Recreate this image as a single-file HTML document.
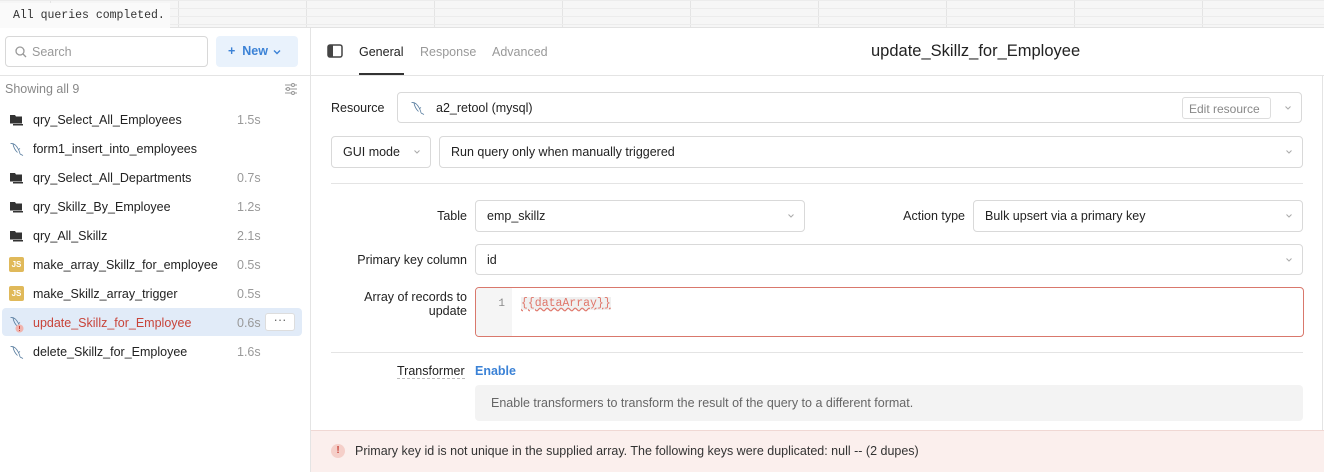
<!DOCTYPE html>
<html><head><style>
*{box-sizing:border-box;margin:0;padding:0}
body{width:1324px;height:472px;overflow:hidden;font-family:"Liberation Sans",sans-serif;font-size:12.5px;color:#222;background:#fff;position:relative}
.abs{position:absolute}
.top{left:0;top:0;width:1324px;height:28px;background:#f6f6f6;border-bottom:1px solid #e2e2e2;
background-image:linear-gradient(#ececec 1px,transparent 1px),linear-gradient(90deg,#e4e4e4 1px,transparent 1px);background-size:100% 8px,128px 100%;background-position:0 0,50px 0}
.toast{left:0;top:3px;width:170px;height:25px;background:#fafafa;font-family:"Liberation Mono",monospace;font-size:11.5px;padding:6px 0 0 13px;color:#333;white-space:nowrap}
.side{left:0;top:28px;width:311px;height:444px;border-right:1px solid #e4e4e4;background:#fff}
.search{left:5px;top:36px;width:203px;height:31px;border:1px solid #d8d8d8;border-radius:4px;color:#999;padding:8px 0 0 26px}
.new{left:216px;top:36px;width:82px;height:31px;background:#e9f2fc;border-radius:4px;color:#3b82d6;font-weight:bold;padding:8px 0 0 12px}
.row{left:2px;width:300px;height:28px;padding:8px 0 0 31px;white-space:nowrap}
.row .t{position:absolute;left:235px;top:8px;color:#999}
.ic{position:absolute;left:7px;top:7px}
.js{width:15px;height:15px;background:#e0b95a;border-radius:2px;color:#fff;font-size:8px;font-weight:bold;text-align:center;line-height:15px;top:7px;font-style:normal}
.box{border:1px solid #d9d9d9;border-radius:4px;background:#fff;padding:8px 0 0 11px}
.chev{position:absolute;right:9px;top:50%;margin-top:-3px}
.lbl{text-align:right;width:200px;color:#222}
</style></head><body>
<div class="abs top"></div>
<div class="abs toast">All queries completed.</div>
<div class="abs side"></div>
<div class="abs search"><svg class="abs" style="left:9px;top:9px" width="12" height="12" viewBox="0 0 12 12"><circle cx="5" cy="5" r="4" fill="none" stroke="#999" stroke-width="1.3"/><path d="M8 8l3 3" stroke="#999" stroke-width="1.3"/></svg>Search</div>
<div class="abs new">+ &nbsp;New <svg width="8" height="6" viewBox="0 0 8 6" style="margin-left:2px"><path d="M1 1.5l3 3 3-3" stroke="#3b82d6" fill="none" stroke-width="1.4"/></svg></div>
<div class="abs" style="left:0;top:75px;width:310px;border-top:1px solid #e4e4e4"></div>
<div class="abs" style="left:5px;top:82px;color:#888">Showing all 9</div>
<svg class="abs" style="left:284px;top:82px" width="14" height="14" viewBox="0 0 14 14" stroke="#999" fill="none"><path d="M1 3h12M1 7h12M1 11h12"/><circle cx="9" cy="3" r="1.5" fill="#fff"/><circle cx="4" cy="7" r="1.5" fill="#fff"/><circle cx="9" cy="11" r="1.5" fill="#fff"/></svg>

<svg width="0" height="0" style="position:absolute"><defs>
<symbol id="fd" viewBox="0 0 16 16"><path d="M1 3h5l1 1.5h6v7H1z" fill="#333"/><rect x="4" y="12" width="10" height="1.5" fill="#333"/></symbol>
<symbol id="my" viewBox="0 0 16 16"><path d="M1.5 2.5c3-.5 6 2 8 6 .8 1.8 1.5 3.5 1.5 4.5M4 3c.5 3 2 6 4.5 8.5M11 13l3 1.5M9.5 8.5l1.5-1" stroke="#5a7ea0" fill="none" stroke-width="0.8"/></symbol>
<symbol id="cv" viewBox="0 0 8 6"><path d="M1.5 1.5l2.5 2.5 2.5-2.5" stroke="#aaa" fill="none" stroke-width="1"/></symbol>
</defs></svg>

<div class="abs row" style="top:105px"><svg class="ic" width="16" height="16"><use href="#fd"/></svg>qry_Select_All_Employees<span class="t">1.5s</span></div>
<div class="abs row" style="top:134px"><svg class="ic" width="16" height="16"><use href="#my"/></svg>form1_insert_into_employees</div>
<div class="abs row" style="top:163px"><svg class="ic" width="16" height="16"><use href="#fd"/></svg>qry_Select_All_Departments<span class="t">0.7s</span></div>
<div class="abs row" style="top:192px"><svg class="ic" width="16" height="16"><use href="#fd"/></svg>qry_Skillz_By_Employee<span class="t">1.2s</span></div>
<div class="abs row" style="top:221px"><svg class="ic" width="16" height="16"><use href="#fd"/></svg>qry_All_Skillz<span class="t">2.1s</span></div>
<div class="abs row" style="top:250px"><i class="ic js">JS</i>make_array_Skillz_for_employee<span class="t">0.5s</span></div>
<div class="abs row" style="top:279px"><i class="ic js">JS</i>make_Skillz_array_trigger<span class="t">0.5s</span></div>
<div class="abs row" style="top:308px;background:#e1ebf8;border-radius:4px;color:#c8443a"><svg class="ic" width="16" height="16"><use href="#my"/></svg><svg class="abs" style="left:13px;top:16px" width="9" height="9" viewBox="0 0 9 9"><circle cx="4.5" cy="4.5" r="4" fill="#f1b3ad"/><path d="M4.5 2v3M4.5 6v1" stroke="#c8443a"/></svg>update_Skillz_for_Employee<span class="t">0.6s</span><span class="abs" style="left:263px;top:5px;width:30px;height:18px;background:#fff;border:1px solid #ddd;border-radius:3px;color:#666;text-align:center;line-height:12px;font-size:13px">···</span></div>
<div class="abs row" style="top:337px"><svg class="ic" width="16" height="16"><use href="#my"/></svg>delete_Skillz_for_Employee<span class="t">1.6s</span></div>

<svg class="abs" style="left:327px;top:44px" width="16" height="14" viewBox="0 0 16 14"><rect x="1" y="1" width="14" height="12" rx="2" fill="none" stroke="#444" stroke-width="1.5"/><rect x="1" y="1" width="5" height="12" fill="#444"/></svg>
<div class="abs" style="left:359px;top:45px">General</div>
<div class="abs" style="left:359px;top:73px;width:45px;height:2px;background:#333"></div>
<div class="abs" style="left:420px;top:45px;color:#999">Response</div>
<div class="abs" style="left:492px;top:45px;color:#999">Advanced</div>
<div class="abs" style="left:871px;top:42px;font-size:16.5px;color:#222">update_Skillz_for_Employee</div>
<div class="abs" style="left:311px;top:75px;width:1013px;border-top:1px solid #e4e4e4"></div>
<div class="abs" style="left:1322px;top:75px;height:355px;border-left:1px solid #e4e4e4"></div>

<div class="abs" style="left:331px;top:101px">Resource</div>
<div class="abs box" style="left:397px;top:92px;width:905px;height:31px;padding-left:38px">a2_retool (mysql)<svg class="abs" style="left:12px;top:7px" width="16" height="16"><use href="#my"/></svg><span class="abs" style="left:784px;top:4px;width:89px;height:22px;border:1px solid #ddd;border-radius:3px;color:#888;padding:4px 0 0 6px;font-size:12px">Edit resource</span><svg class="chev" width="8" height="6"><use href="#cv"/></svg></div>
<div class="abs box" style="left:331px;top:136px;width:100px;height:32px">GUI mode<svg class="chev" width="8" height="6"><use href="#cv"/></svg></div>
<div class="abs box" style="left:439px;top:136px;width:864px;height:32px">Run query only when manually triggered<svg class="chev" width="8" height="6"><use href="#cv"/></svg></div>
<div class="abs" style="left:331px;top:183px;width:972px;border-top:1px solid #e4e4e4"></div>

<div class="abs lbl" style="left:267px;top:209px">Table</div>
<div class="abs box" style="left:475px;top:200px;width:330px;height:32px">emp_skillz<svg class="chev" width="8" height="6"><use href="#cv"/></svg></div>
<div class="abs lbl" style="left:765px;top:209px">Action type</div>
<div class="abs box" style="left:973px;top:200px;width:330px;height:32px">Bulk upsert via a primary key<svg class="chev" width="8" height="6"><use href="#cv"/></svg></div>
<div class="abs lbl" style="left:267px;top:253px">Primary key column</div>
<div class="abs box" style="left:475px;top:244px;width:828px;height:31px">id<svg class="chev" width="8" height="6"><use href="#cv"/></svg></div>
<div class="abs lbl" style="left:267px;top:290px;line-height:14px">Array of records to<br>update</div>
<div class="abs" style="left:475px;top:287px;width:829px;height:50px;border:1px solid #d9786c;border-radius:4px;background:#fff;overflow:hidden">
<div class="abs" style="left:0;top:0;width:36px;height:50px;background:#f5f5f5;color:#888;font-size:11px;text-align:right;padding:10px 7px 0 0;font-family:'Liberation Mono',monospace">1</div>
<div class="abs" style="left:45px;top:9px;font-family:'Liberation Mono',monospace;font-size:11.5px;color:#e0766a;background:#f0f0f0;text-decoration:underline wavy #e0766a">{{dataArray}}</div></div>
<div class="abs" style="left:331px;top:352px;width:972px;border-top:1px solid #e4e4e4"></div>
<div class="abs" style="left:397px;top:364px;border-bottom:1px dashed #bbb">Transformer</div>
<div class="abs" style="left:475px;top:364px;color:#3b82d6;font-weight:bold">Enable</div>
<div class="abs" style="left:475px;top:385px;width:828px;height:36px;background:#f3f3f3;border-radius:4px;color:#666;padding:11px 0 0 16px">Enable transformers to transform the result of the query to a different format.</div>

<div class="abs" style="left:311px;top:430px;width:1013px;height:42px;background:#fbefed;border-top:1px solid #f0d8d4"></div>
<div class="abs" style="left:331px;top:444px;width:14px;height:14px;border-radius:50%;background:#f5cfc9;color:#c8443a;font-size:10px;font-weight:bold;text-align:center;line-height:14px">!</div>
<div class="abs" style="left:355px;top:444px;color:#333">Primary key id is not unique in the supplied array. The following keys were duplicated: null -- (2 dupes)</div>
</body></html>
